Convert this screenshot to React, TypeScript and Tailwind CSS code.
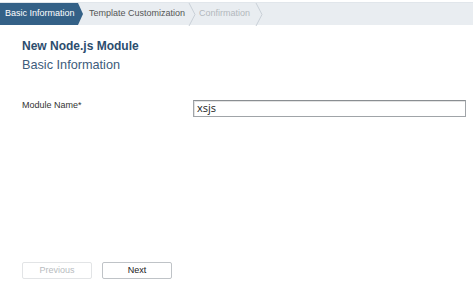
import React from 'react';

const font = { fontFamily: '"Liberation Sans", Arial, sans-serif' };

function Chevron() {
  return (
    <svg width="8" height="23" viewBox="0 0 8 23" className="shrink-0 block" aria-hidden="true">
      <path d="M1 0 L7 11.5 L1 23" fill="none" stroke="#c9d0d7" strokeWidth="1" />
    </svg>
  );
}

export default function App() {
  return (
    <div className="w-[474px] h-[285px] bg-white relative text-[#333]" style={font}>
      {/* Step bar */}
      <div className="mt-[2px] h-[23px] w-[473px] bg-[#e9edf1] border-t border-[#e1e6eb] flex items-center text-[9px] whitespace-nowrap">
        <div className="h-full w-[83px] shrink-0 bg-[#346187] text-white flex items-center pl-[5px] [clip-path:polygon(0_0,78px_0,83px_50%,78px_100%,0_100%)]">
          Basic Information
        </div>
        <span className="ml-[6px] text-[#555]">Template Customization</span>
        <span className="ml-[3px]"><Chevron /></span>
        <span className="ml-[3px] text-[#b3b8bd]">Confirmation</span>
        <span className="ml-[5px]"><Chevron /></span>
      </div>

      {/* Header */}
      <div className="pl-[22px] pt-[13px]">
        <h1 className="text-[12px] font-bold text-[#2c4d6e] leading-[16px]">New Node.js Module</h1>
        <h2 className="text-[12.7px] text-[#3d5c7c] leading-[18px] mt-[2px]">Basic Information</h2>
      </div>

      {/* Form */}
      <div className="flex items-center pl-[22px] mt-[26px]">
        <label className="text-[9px] text-[#333] w-[171px] -mt-[5px]">Module Name*</label>
        <div className="w-[273px] h-[17px] border border-[#a0a4a8] border-t-[#8a8e92] bg-white flex items-center px-[3px] shadow-[inset_1px_1px_0_#e3e3e3]">
          <span className="text-[11px] text-[#222]" style={{ fontFamily: '"Open Sans", "Liberation Sans", sans-serif' }}>xsjs</span>
        </div>
      </div>

      {/* Buttons */}
      <div className="absolute left-[22px] top-[260px] flex gap-[10px] text-[9px]">
        <button className="w-[70px] h-[17px] border border-[#e2e4e6] bg-white text-[#b8bcc0] rounded-[2px]">Previous</button>
        <button className="w-[70px] h-[17px] border border-[#bfc3c7] bg-white text-[#222] rounded-[2px]">Next</button>
      </div>
    </div>
  );
}
